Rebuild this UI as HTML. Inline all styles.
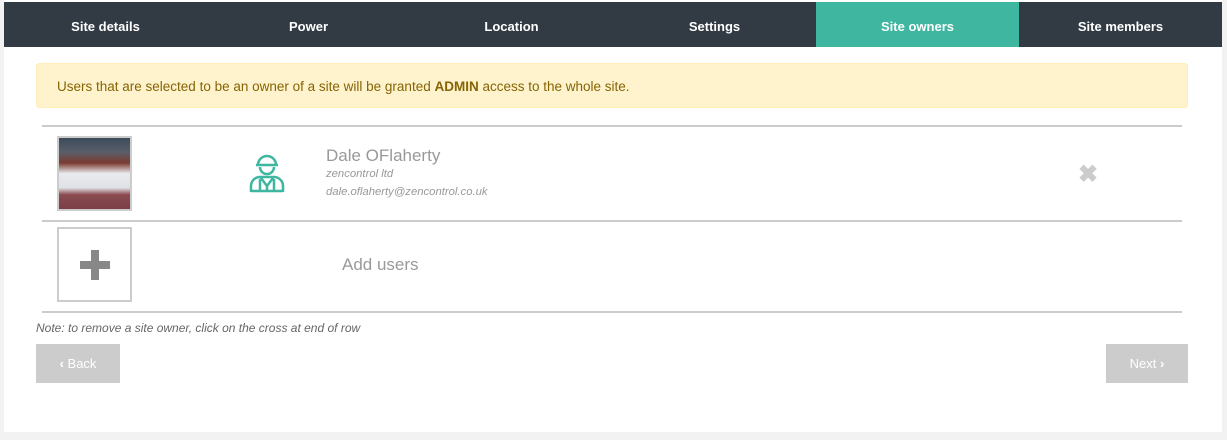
<!DOCTYPE html>
<html><head><style>
*{box-sizing:border-box;margin:0;padding:0}
body{width:1227px;height:440px;background:#f2f2f2;font-family:"Liberation Sans",sans-serif;position:relative;overflow:hidden}
.wrap{position:absolute;left:4px;top:0;width:1218px;height:432px;background:#fff}
.nav{position:absolute;left:4px;top:2px;width:1218px;height:45px;background:#323a43;display:flex}
.nav div{flex:1;color:#fff;font-weight:bold;font-size:13px;text-align:center;line-height:50px}
.nav .act{background:#3eb6a0}
.alert{position:absolute;left:36px;top:63px;width:1152px;height:45px;background:#fff3cd;border:1px solid #ffeeba;border-radius:3px;color:#856404;font-size:13.5px;padding-left:20px;line-height:45px}
.line{position:absolute;left:42px;width:1140px;height:2px;background:#ccc}
.abs{position:absolute}
.btn{position:absolute;top:344px;height:39px;background:#ccc;color:#fff;font-size:13px;line-height:39px;text-align:center}
</style></head><body>
<div class="wrap"></div>
<div class="nav"><div>Site details</div><div>Power</div><div>Location</div><div>Settings</div><div class="act">Site owners</div><div>Site members</div></div>
<div class="alert">Users that are selected to be an owner of a site will be granted <b>ADMIN</b> access to the whole site.</div>
<div class="line" style="top:125px"></div>
<div class="line" style="top:220px"></div>
<div class="line" style="top:311px"></div>
<div class="abs" style="left:57px;top:136px;width:75px;height:75px;border:2px solid #ccc;background:linear-gradient(#3c4a5a 0,#5a5f6a 20%,#7a3a30 35%,#e8eaee 50%,#dfe2e6 70%,#8a4a50 80%,#7a3f45 100%)"></div>
<svg class="abs" style="left:248px;top:153px" width="38" height="40" viewBox="0 0 38 40" fill="none" stroke="#3eb6a0" stroke-width="2.5">
<path d="M10 12 a9 9 0 0 1 18 0 M8 12h22"/><path d="M12 14 a7 7 0 0 0 14 0"/><path d="M3 39 v-6 a9 9 0 0 1 9-9 h14 a9 9 0 0 1 9 9 v6 M3 38h32 M13 25 l6 8 6-8 M19 33v6 M12 26v13 M26 26v13"/></svg>
<div class="abs" style="left:326px;top:146px;font-size:17px;color:#999">Dale OFlaherty</div>
<div class="abs" style="left:326px;top:168px;font-size:11.3px;color:#999;font-style:italic">zencontrol ltd</div>
<div class="abs" style="left:326px;top:186px;font-size:11.3px;color:#999;font-style:italic">dale.oflaherty@zencontrol.co.uk</div>
<div class="abs" style="left:1078px;top:160px;font-size:24px;color:#ccc;font-weight:bold">✖</div>
<div class="abs" style="left:57px;top:227px;width:75px;height:75px;border:2px solid #ccc"></div>
<div class="abs" style="left:80px;top:261px;width:30px;height:8px;background:#888"></div>
<div class="abs" style="left:91px;top:250px;width:8px;height:30px;background:#888"></div>
<div class="abs" style="left:342px;top:255px;font-size:17px;color:#999">Add users</div>
<div class="abs" style="left:36px;top:321px;font-size:12px;color:#666;font-style:italic">Note: to remove a site owner, click on the cross at end of row</div>
<div class="btn" style="left:36px;width:84px"><b>‹</b> Back</div>
<div class="btn" style="left:1106px;width:82px">Next <b>›</b></div>
</body></html>
